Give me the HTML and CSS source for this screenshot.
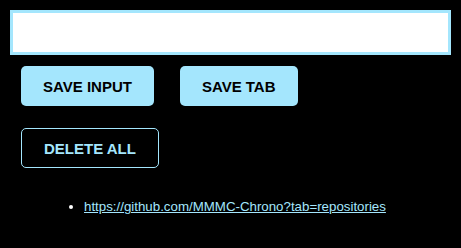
FILE: index.html
```html
<!DOCTYPE html>
<html>

<head>
    <title>Leads Tracker</title>
    <link rel="stylesheet" href="styles.css">
</head>

<body>
    <input type="text" id="input-el">
    <div class="actions">
        <button id="input-btn">SAVE INPUT</button>
        <button id="tab-btn">SAVE TAB</button>
    </div>
    <button id="delete-btn">DELETE ALL</button>
    <ul id="ul-el">
        <li><a href="https://github.com/MMMC-Chrono?tab=repositories" target="_blank">https://github.com/MMMC-Chrono?tab=repositories</a></li>
    </ul>
</body>

</html>
```

FILE: styles.css
```css
* {
    margin: 0;
    padding: 0;
    box-sizing: border-box;
}

body {
    background-color: black;
    padding: 10px;
    font-family: "Liberation Sans", Arial, sans-serif;
}

#input-el {
    display: block;
    width: 100%;
    height: 45px;
    border: 3px solid #a4e6fd;
    background: white;
    outline: none;
    padding: 0 10px;
}

.actions {
    display: flex;
    gap: 26px;
    margin: 11px 0 0 11px;
}

button {
    height: 40px;
    padding: 0 22px;
    border-radius: 5px;
    font: 700 15px "Liberation Sans", Arial, sans-serif;
    cursor: pointer;
}

#input-btn,
#tab-btn {
    background-color: #a4e6fd;
    color: black;
    border: none;
}

#delete-btn {
    display: block;
    margin: 22px 0 0 11px;
    background-color: black;
    color: #a4e6fd;
    border: 1px solid #a4e6fd;
}

#ul-el {
    margin-top: 31px;
    padding-left: 74px;
    color: white;
    font-size: 13.3px;
}

#ul-el a {
    color: #a4e6fd;
}
```
